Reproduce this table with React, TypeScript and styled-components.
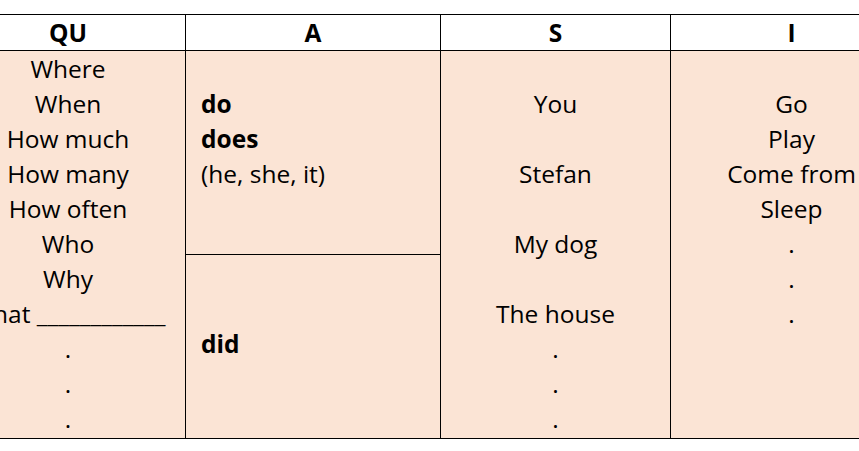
import styled, { createGlobalStyle } from 'styled-components';

const GlobalStyle = createGlobalStyle`
  html, body {
    margin: 0;
    padding: 0;
    overflow: hidden;
    background: #ffffff;
  }
  body {
    font-family: "Open Sans", "Noto Sans", sans-serif;
    color: #000000;
  }
`;

const qu = ['Where', 'When', 'How much', 'How many', 'How often', 'Who', 'Why', 'What ____________', '.', '.', '.'];
const subjects = ['', 'You', '', 'Stefan', '', 'My dog', '', 'The house', '.', '.', '.'];
const infinitives = ['', 'Go', 'Play', 'Come from', 'Sleep', '.', '.', '.'];

const App = () => {
  return (
    <>
      <GlobalStyle />
      <Page>
        <Grammar>
          <colgroup>
            <col style={{ width: 235 }} />
            <col style={{ width: 255 }} />
            <col style={{ width: 230 }} />
            <col style={{ width: 242 }} />
          </colgroup>
          <thead>
            <tr>
              <HeadCell>QU</HeadCell>
              <HeadCell>A</HeadCell>
              <HeadCell>S</HeadCell>
              <HeadCell>I</HeadCell>
            </tr>
          </thead>
          <tbody>
            <UpperRow>
              <ListCell rowSpan={2}>
                {qu.map((word, index) => (
                  <Line key={index}>{word}</Line>
                ))}
              </ListCell>
              <AuxCell $padTop={35}>
                <Line $bold>do</Line>
                <Line $bold>does</Line>
                <Line>(he, she, it)</Line>
              </AuxCell>
              <ListCell rowSpan={2}>
                {subjects.map((word, index) => (
                  <Line key={index}>{word}</Line>
                ))}
              </ListCell>
              <ListCell rowSpan={2}>
                {infinitives.map((word, index) => (
                  <Line key={index}>{word}</Line>
                ))}
              </ListCell>
            </UpperRow>
            <LowerRow>
              <AuxCell $padTop={71}>
                <Line $bold>did</Line>
              </AuxCell>
            </LowerRow>
          </tbody>
        </Grammar>
      </Page>
    </>
  );
};

export default App;

const Page = styled.div`
  width: 859px;
  height: 451px;
  padding-top: 14px;
  box-sizing: border-box;
  overflow: hidden;
`;

const Grammar = styled.table`
  width: 962px;
  margin-left: -50px;
  border-collapse: collapse;
  table-layout: fixed;
  font-size: 24.5px;
`;

const HeadCell = styled.th`
  height: 35px;
  padding: 0;
  border: 1px solid #000000;
  background: #ffffff;
  font-weight: 700;
  text-align: center;
  line-height: 35px;
`;

const UpperRow = styled.tr`
  height: 204px;
`;

const LowerRow = styled.tr`
  height: 184px;
`;

const ListCell = styled.td`
  padding: 0;
  border: 1px solid #000000;
  background: #fbe4d5;
  vertical-align: top;
  text-align: center;
`;

const AuxCell = styled.td<{ $padTop: number }>`
  padding: ${({ $padTop }) => $padTop}px 0 0 15px;
  border: 1px solid #000000;
  background: #fbe4d5;
  vertical-align: top;
  text-align: left;
`;

const Line = styled.div<{ $bold?: boolean }>`
  height: 35px;
  line-height: 35px;
  white-space: nowrap;
  font-weight: ${({ $bold }) => ($bold ? 700 : 400)};
`;
